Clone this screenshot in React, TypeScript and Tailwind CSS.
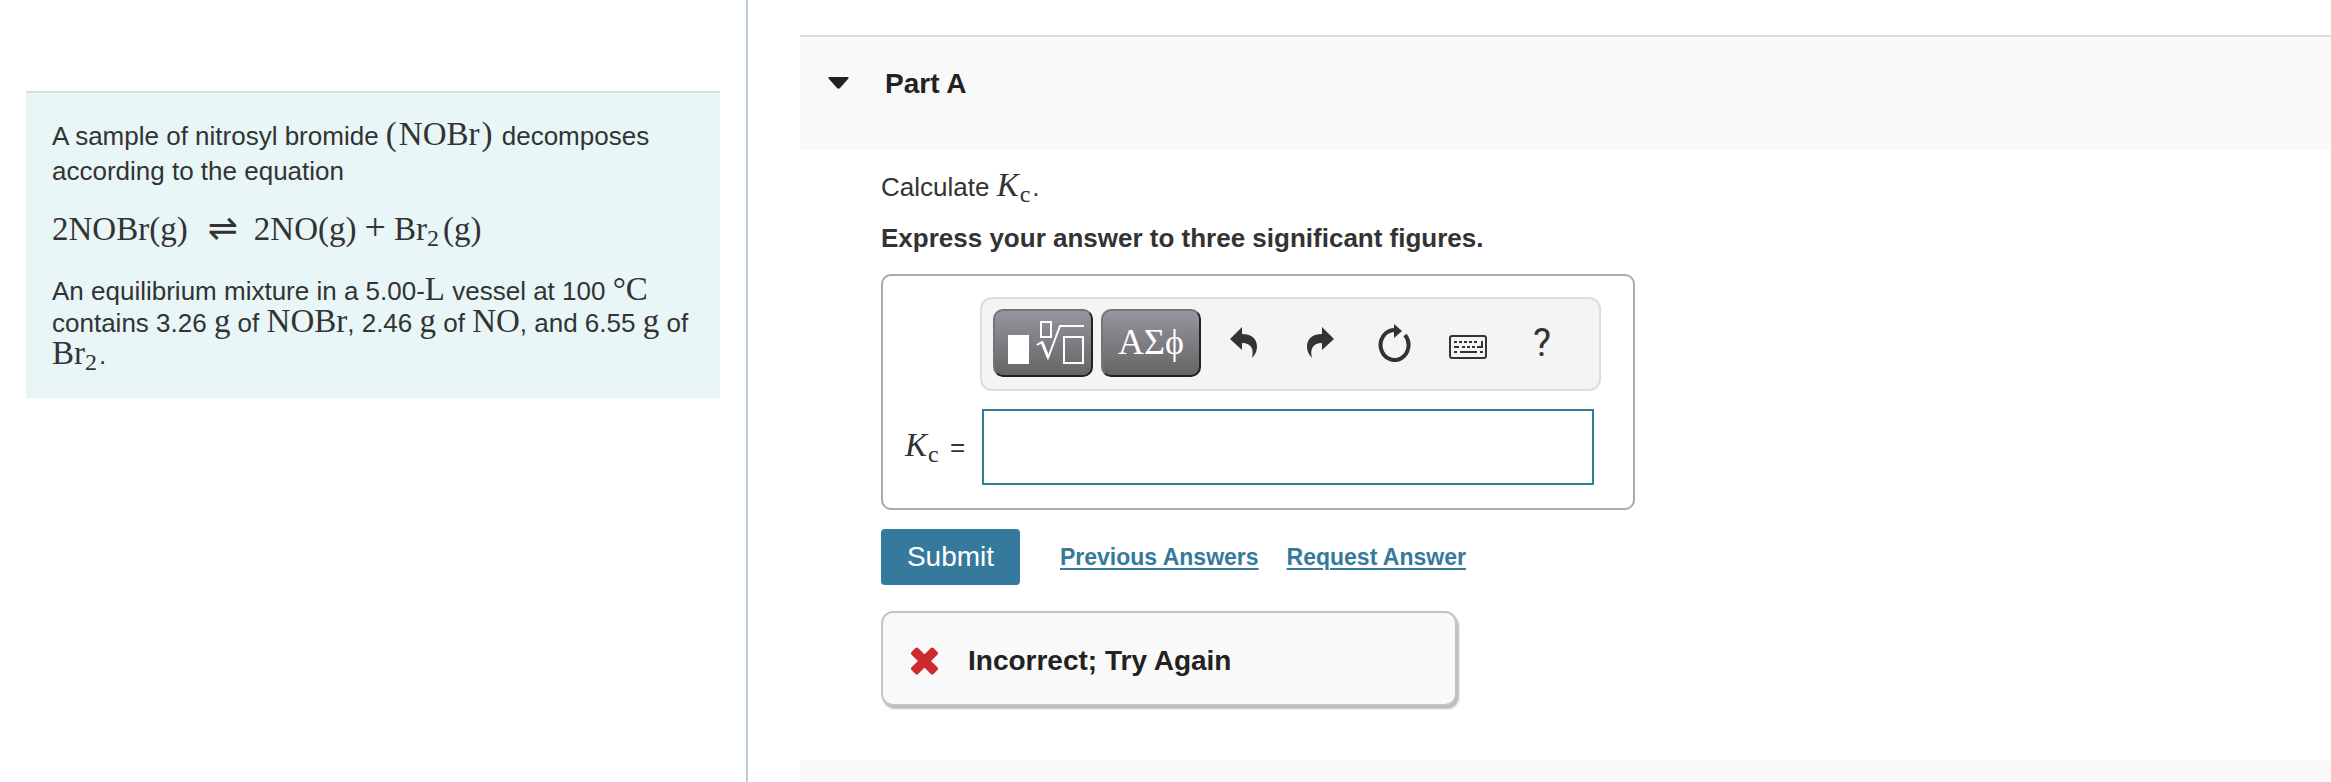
import React from 'react';

const mathCls = "font-['Liberation_Serif',serif] text-[33px] leading-[0]";
const iconBtnCls = 'flex h-17 w-[74px] items-center justify-center text-[#333]';
const paletteBtnCls =
  'flex h-17 w-[100px] items-center justify-center rounded-[10px] border-2 border-t-[#757575] border-l-[#757575] border-r-[#222] border-b-[#222] bg-linear-to-b from-[#97959f] to-[#656565] text-white';
const linkCls = 'text-[23px] leading-[28px] font-bold text-[#357a9c] underline decoration-2 underline-offset-3';

function M({ children }: { children: React.ReactNode }) {
  return <span className={mathCls}>{children}</span>;
}

function Sub({ children }: { children: React.ReactNode }) {
  return <sub className="pr-0.5 text-[24px]">{children}</sub>;
}

function Kc() {
  return (
    <M>
      <i className="pr-px">K</i>
      <Sub>c</Sub>
    </M>
  );
}

function TemplateIcon() {
  return (
    <svg width="82" height="44" viewBox="-6 0 82 44" fill="none" stroke="currentColor" strokeWidth="2" aria-hidden="true">
      <rect x="0" y="14" width="21" height="29" fill="currentColor" stroke="none" />
      <rect x="33" y="1" width="10" height="15" />
      <path d="M29 24 L34 21 L40 37 L52 5 H76" />
      <path d="M34 21 L40 36" strokeWidth="3" />
      <rect x="56" y="16" width="19" height="26" />
    </svg>
  );
}

function UndoIcon() {
  return (
    <svg width="28" height="32" viewBox="0 0 28 32" fill="currentColor" aria-hidden="true">
      <path d="M0 12 L12 0 V7 C21 7 27 11 27 20 C27 24 25 28 22 31 C24 23 22 16 12 16 V23 Z" />
    </svg>
  );
}

function RedoIcon() {
  return (
    <svg width="28" height="32" viewBox="0 0 28 32" fill="currentColor" aria-hidden="true">
      <path d="M28 12 L16 0 V7 C7 7 1 11 1 20 C1 24 3 28 6 31 C4 23 6 16 16 16 V23 Z" />
    </svg>
  );
}

function ResetIcon() {
  return (
    <svg width="34" height="38" viewBox="0 0 34 38" fill="none" aria-hidden="true">
      <path d="M17 6 A14 15 0 1 0 28 11" stroke="currentColor" strokeWidth="4" />
      <path d="M17 0 L25 7 L17 14 Z" fill="currentColor" />
    </svg>
  );
}

function KeyboardIcon() {
  return (
    <svg width="40" height="26" viewBox="0 0 40 26" fill="none" stroke="currentColor" aria-hidden="true">
      <rect x="2" y="2" width="36" height="22" rx="2" strokeWidth="2" />
      <path d="M6 8 H31" strokeWidth="2" strokeDasharray="3 2" />
      <path d="M6 13 H11 M14 13 H17 M19 13 H22 M24 13 H27 M29 13 H35 M34 7 V14" strokeWidth="2" />
      <path d="M6 18 H9 M12 18 H29 M32 18 H35" strokeWidth="2" />
    </svg>
  );
}

function CrossIcon() {
  return (
    <svg width="27" height="28" viewBox="0 0 28 28" fill="#cc2a2d" stroke="#cc2a2d" strokeWidth="4" strokeLinejoin="round" aria-hidden="true">
      <path d="M6 2 L14 10 L22 2 L26 6 L18 14 L26 22 L22 26 L14 18 L6 26 L2 22 L10 14 L2 6 Z" />
    </svg>
  );
}

export default function App() {
  return (
    <div className="flex min-h-screen bg-white font-['Liberation_Sans',Arial,sans-serif] text-[26px] text-[#333]">
      {/* Problem statement */}
      <aside className="w-[748px] shrink-0 border-r-2 border-[#b8cbdf] pt-[91px] pr-[26px] pl-[26px]">
        <section className="border-t-2 border-[#ddd] bg-[#e8f6f7] px-[26px] pt-[26px] pb-[27px]">
          <p className="leading-[35px]">
            A sample of nitrosyl bromide{' '}
            <M>
              <span className="pr-0.5">(</span>NOBr<span className="px-0.5">)</span>
            </M>{' '}
            decomposes according to the equation
          </p>
          <p className="mt-[25px] leading-[35px]">
            <M>
              2NOBr(g)
              <span className="mr-4 ml-5 font-['DejaVu_Sans',sans-serif] text-[36px]">⇌</span>
              2NO(g)
              <span className="mx-2 text-[38px]">+</span>
              Br<Sub>2</Sub>
              <span className="pl-0.5">(g)</span>
            </M>
          </p>
          <p className="mt-[26px] leading-[32px]">
            An equilibrium mixture in a 5.00-<M>L</M> vessel at 100 <M>°C</M> contains 3.26 <M>g</M> of{' '}
            <M>NOBr</M>, 2.46 <M>g</M> of <M>NO</M>, and 6.55 <M>g</M> of{' '}
            <M>
              Br<Sub>2</Sub>
            </M>
            .
          </p>
        </section>
      </aside>

      {/* Answer area */}
      <main className="flex min-w-0 flex-1 flex-col pt-[35px] pl-[52px]">
        <header className="flex h-[115px] items-start border-t-2 border-[#ddd] bg-[#f9f9f9] pt-[31px] pl-[28px]">
          <button type="button" aria-label="Collapse Part A" className="flex h-[30px] items-center text-[#222]">
            <svg width="21" height="12" viewBox="0 0 21 12" fill="currentColor" aria-hidden="true">
              <path d="M2 0 H19 Q22 0 20 2 L12 11 Q10.500 12.500 9 11 L1 2 Q-1 0 2 0 Z" />
            </svg>
          </button>
          <h2 className="ml-[36px] text-[28px] leading-[32px] font-bold text-[#222]">Part A</h2>
        </header>

        <div className="flex flex-col items-start pl-[81px]">
          <p className="mt-[18px] leading-[38px]">
            Calculate <Kc />.
          </p>
          <p className="mt-[14px] leading-[36px] font-bold">Express your answer to three significant figures.</p>

          <form className="flex flex-col items-start" onSubmit={(e) => e.preventDefault()}>
            <div className="mt-[18px] grid grid-cols-[97px_auto] rounded-[10px] border-2 border-[#aaa] pt-[21px] pr-[32px] pb-[23px]">
              <div className="col-start-2 flex h-[94px] w-[621px] items-start gap-2 rounded-[12px] border-2 border-[#ddd] bg-[#f4f4f4] pt-[10px] pl-[11px]">
                <button type="button" aria-label="Templates" className={paletteBtnCls}>
                  <TemplateIcon />
                </button>
                <button type="button" className={paletteBtnCls}>
                  <span className="pb-0.5 font-['Liberation_Serif',serif] text-[36px] leading-none">ΑΣϕ</span>
                </button>
                <div className="flex">
                  <button type="button" aria-label="Undo" className={`${iconBtnCls} pr-1`}>
                    <UndoIcon />
                  </button>
                  <button type="button" aria-label="Redo" className={iconBtnCls}>
                    <RedoIcon />
                  </button>
                  <button type="button" aria-label="Reset" className={iconBtnCls}>
                    <ResetIcon />
                  </button>
                  <button type="button" aria-label="Keyboard shortcuts" className={`${iconBtnCls} pt-2`}>
                    <KeyboardIcon />
                  </button>
                  <button type="button" className={iconBtnCls}>
                    <span className="font-[Roboto,sans-serif] text-[38px] leading-none">?</span>
                  </button>
                </div>
              </div>
              <label htmlFor="answer" className="mt-[18px] flex h-[76px] items-center pl-[22px]">
                <span>
                  <Kc /> <span className="pl-0.5">=</span>
                </span>
              </label>
              <input
                id="answer"
                type="text"
                className="mt-[18px] ml-[2px] h-[76px] w-[612px] border-2 border-[#357a9c] bg-white px-3 outline-none"
              />
            </div>

            <div className="mt-[19px] flex items-center">
              <button type="submit" className="h-14 w-[139px] rounded-[4px] bg-[#357a9c] text-[28px] text-white">
                Submit
              </button>
              <a href="#previous" className={`ml-[40px] ${linkCls}`}>
                Previous Answers
              </a>
              <a href="#request" className={`ml-7 ${linkCls}`}>
                Request Answer
              </a>
            </div>
          </form>

          <div
            role="status"
            className="mt-[26px] flex h-[95px] w-[576px] items-center rounded-[12px] border-2 border-[#c4c4c4] bg-[#f9f9f9] pt-1 pl-[28px] shadow-[2px_3px_2px_#bbb]"
          >
            <CrossIcon />
            <span className="ml-[30px] text-[28px] font-bold text-[#222]">Incorrect; Try Again</span>
          </div>
        </div>

        <div className="mt-[54px] min-h-[22px] flex-1 bg-[#f9f9f9]" />
      </main>
    </div>
  );
}
